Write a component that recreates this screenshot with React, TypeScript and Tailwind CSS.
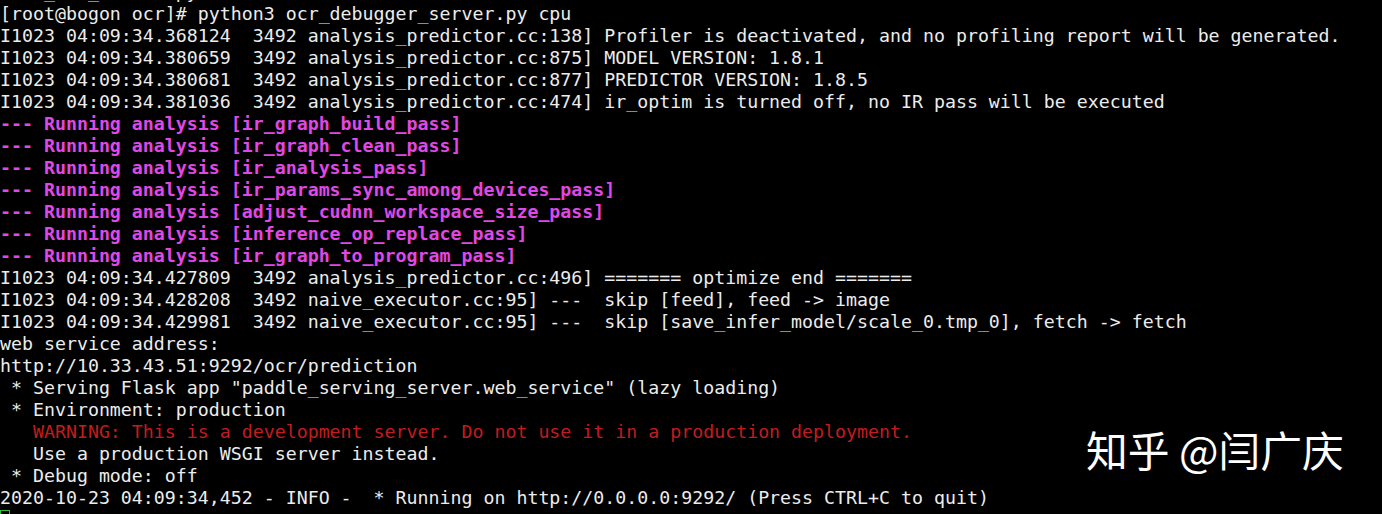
import React from "react";

type Line = { t: string; c?: "m" | "r" };

const lines: Line[] = [
  { t: "test_ocr_server.py" },
  { t: "[root@bogon ocr]# python3 ocr_debugger_server.py cpu" },
  { t: "I1023 04:09:34.368124  3492 analysis_predictor.cc:138] Profiler is deactivated, and no profiling report will be generated." },
  { t: "I1023 04:09:34.380659  3492 analysis_predictor.cc:875] MODEL VERSION: 1.8.1" },
  { t: "I1023 04:09:34.380681  3492 analysis_predictor.cc:877] PREDICTOR VERSION: 1.8.5" },
  { t: "I1023 04:09:34.381036  3492 analysis_predictor.cc:474] ir_optim is turned off, no IR pass will be executed" },
  { t: "--- Running analysis [ir_graph_build_pass]", c: "m" },
  { t: "--- Running analysis [ir_graph_clean_pass]", c: "m" },
  { t: "--- Running analysis [ir_analysis_pass]", c: "m" },
  { t: "--- Running analysis [ir_params_sync_among_devices_pass]", c: "m" },
  { t: "--- Running analysis [adjust_cudnn_workspace_size_pass]", c: "m" },
  { t: "--- Running analysis [inference_op_replace_pass]", c: "m" },
  { t: "--- Running analysis [ir_graph_to_program_pass]", c: "m" },
  { t: "I1023 04:09:34.427809  3492 analysis_predictor.cc:496] ======= optimize end =======" },
  { t: "I1023 04:09:34.428208  3492 naive_executor.cc:95] ---  skip [feed], feed -> image" },
  { t: "I1023 04:09:34.429981  3492 naive_executor.cc:95] ---  skip [save_infer_model/scale_0.tmp_0], fetch -> fetch" },
  { t: "web service address:" },
  { t: "http://10.33.43.51:9292/ocr/prediction" },
  { t: ' * Serving Flask app "paddle_serving_server.web_service" (lazy loading)' },
  { t: " * Environment: production" },
  { t: "   WARNING: This is a development server. Do not use it in a production deployment.", c: "r" },
  { t: "   Use a production WSGI server instead." },
  { t: " * Debug mode: off" },
  { t: "2020-10-23 04:09:34,452 - INFO -  * Running on http://0.0.0.0:9292/ (Press CTRL+C to quit)" },
];

export default function App() {
  return (
    <div className="relative w-[1382px] h-[514px] overflow-hidden bg-black">
      <div
        className="mt-[-19px] text-[18.25px] leading-[22px] text-[#ececec] whitespace-pre"
        style={{ fontFamily: '"DejaVu Sans Mono", "Liberation Mono", monospace' }}
      >
        {lines.map((l, i) => (
          <div
            key={i}
            className={
              l.c === "m"
                ? "font-bold text-[#e048e6]"
                : l.c === "r"
                ? "text-[#c41c1c]"
                : ""
            }
          >
            {l.t}
          </div>
        ))}
        <div className="h-[22px]">
          <span className="inline-block w-[10px] h-[20px] mt-[1px] border border-[#2fbf3a]" />
        </div>
      </div>
      <div
        className="absolute left-[1086px] top-[423px] text-[41.8px] leading-[52px] text-white whitespace-pre"
        style={{ fontFamily: '"Noto Sans CJK SC", "Noto Sans", sans-serif' }}
      >
        知乎 @闫广庆
      </div>
    </div>
  );
}
